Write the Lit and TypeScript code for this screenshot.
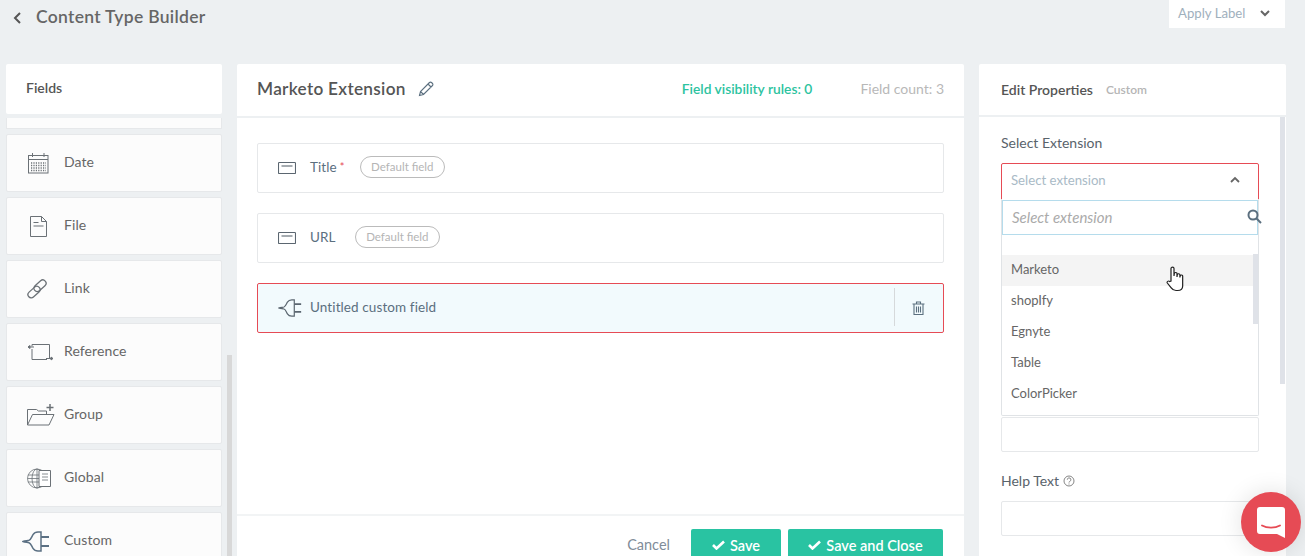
import { LitElement, html, css } from "lit";
import { customElement } from "lit/decorators.js";

const plug = (w: number, h: number, color: string, sw = 1.5) => html`<svg width=${w} height=${h} viewBox="0 0 28 21" fill="none" stroke=${color} stroke-width=${sw}><path d="M1 10.500c2-.9 4-.7 6-1.200 2-.6 2.500-3.200 4-5.600 1-1.600 2.500-2.700 5-2.700h3v19h-3c-2.500 0-4-1.100-5-2.700-1.500-2.400-2-5-4-5.600-2-.5-4-.3-6-1.200z" fill="none"/><path d="M19 6h8M19 15h8" stroke-width="2"/></svg>`;
const textIcon = html`<svg width="18" height="14" viewBox="0 0 18 14" fill="none" stroke="#5b6670" stroke-width="1.100"><rect x=".5" y="1.500" width="17" height="11" rx=".8"/><path d="M3.500 5h11"/></svg>`;

const icons: Record<string, unknown> = {
  Date: html`<svg width="21" height="21" viewBox="0 0 21 21" fill="none" stroke="#6b7176" stroke-width="1"><rect x=".5" y="2.500" width="19.500" height="17.500"/><path d="M.5 6.500h19.500M4.500 0v4M16 0v4"/><path d="M3 10h15M3 12.500h15M3 15h15M3 17.500h15" stroke-dasharray="1.200 1.200" stroke-width="1.300"/></svg>`,
  File: html`<svg width="17" height="21" viewBox="0 0 17 21" fill="none" stroke="#6b7176" stroke-width="1"><path d="M.5.500h11l5 5v15H.5zM11.500.500v5h5"/><path d="M3.500 6.500h5M3.500 10h10"/></svg>`,
  Link: html`<svg width="22" height="20" viewBox="0 0 22 20" fill="none" stroke="#6b7176" stroke-width="1.300"><rect x="7" y="3.500" width="14" height="6.500" rx="3.250" transform="rotate(-42 14 6.750)"/><rect x="1" y="9.800" width="14" height="6.500" rx="3.250" transform="rotate(-42 8 13)"/></svg>`,
  Reference: html`<svg width="28" height="18" viewBox="0 0 28 18" fill="none" stroke="#6b7176" stroke-width="1"><path d="M5 3.500V1.500h17.500v13.500M20 16.500H5V6"/><path d="M1 4h6M19 15.500h7"/><path d="M3 2.500 1 4l2 1.500zM24 14l2 1.500-2 1.500z" fill="#6b7176"/></svg>`,
  Group: html`<svg width="28" height="22" viewBox="0 0 28 22" fill="none" stroke="#6b7176" stroke-width="1"><path d="M.5 21V5.500h9l2 1.500h8v3"/><path d="M.5 21 5.500 10.500H27L22 21z"/><path d="M23 0v7M19.500 3.500h7" stroke-width="1.500"/></svg>`,
  Global: html`<svg width="24" height="21" viewBox="0 0 24 21" fill="none" stroke="#6b7176" stroke-width=".8"><circle cx="10" cy="10.500" r="9.500"/><ellipse cx="10" cy="10.500" rx="5" ry="9.500"/><path d="M10 1v19M1 7h18M.5 10.500h18M1 14h18"/><path d="M12 2.500h11.500v16H12z" fill="#fff" stroke-width="1"/><path d="M15 6h6M15 9h6M15 12h6"/></svg>`,
  Custom: plug(28, 21, "#5b7083"),
};

@customElement("app-root")
export class AppRoot extends LitElement {
  static styles = css`
    :host { display: block; position: relative; width: 1305px; height: 556px; overflow: hidden; background: #edf0f2; font-family: "Lato", "Liberation Sans", sans-serif; color: #555; }
    * { box-sizing: border-box; }
    .top { display: flex; height: 64px; align-items: flex-start; padding-left: 13px; }
    .back { margin-top: 12px; }
    .crumb { margin: 6px 0 0 14px; font-size: 17.500px; font-weight: 600; line-height: 22px; color: #666; letter-spacing: .3px; }
    .label-btn { margin-left: auto; margin-right: 20px; width: 116px; height: 28px; background: #fff; display: flex; align-items: center; padding: 0 15px 2px 9px; justify-content: space-between; font-size: 13.200px; color: #9fb0bd; }
    .cols { display: flex; padding-left: 6px; gap: 15px; height: 492px; }
    .left { width: 216px; display: flex; flex-direction: column; }
    .left-head { height: 50px; background: #fff; border-radius: 2px; padding: 0 20px 3px; display: flex; align-items: center; font-size: 14px; font-weight: 600; color: #555; flex: none; }
    .list { display: flex; flex-direction: column; gap: 5px; margin-top: 4px; }
    .stub { height: 11px; background: #fcfcfc; border: 1px solid #e6e8ea; border-top: 0; }
    .card { height: 58px; flex: none; background: #fcfcfc; border: 1px solid #e6e8ea; border-radius: 2px; display: flex; align-items: center; font-size: 14px; letter-spacing: .1px; color: #666; }
    .card .ic { width: 57px; display: flex; justify-content: flex-start; }
    .card span { position: relative; top: -2px; }
    .ic-Date { padding-left: 21px; }
    .ic-File { padding-left: 23px; }
    .ic-Link { padding-left: 19px; }
    .ic-Reference { padding-left: 20px; }
    .ic-Group { padding-left: 20px; }
    .ic-Global { padding-left: 20px; }
    .ic-Custom { padding-left: 15px; }
    .mid { width: 727px; background: #fff; border-radius: 2px 2px 0 0; display: flex; flex-direction: column; position: relative; }
    .mid-head { height: 54px; border-bottom: 2px solid #edf0f2; display: flex; align-items: center; padding: 0 20px 3px 20px; flex: none; }
    .mid-head h1 { margin: 0 12px 0 0; font-size: 17.200px; font-weight: 600; color: #555; letter-spacing: .3px; }
    .rules { margin-left: auto; color: #2dc3a0; font-size: 13.800px; font-weight: 600; }
    .count { margin-left: 48px; color: #b8b8b8; font-size: 14px; }
    .rows { flex: 1; padding: 25px 20px 0; display: flex; flex-direction: column; gap: 20px; }
    .row { height: 50px; border: 1px solid #e6e8ea; border-radius: 2px; display: flex; align-items: center; padding: 0 0 2px 20px; font-size: 13.500px; letter-spacing: .1px; color: #5b6f7f; }
    .row svg { position: relative; top: 1px; }
    .row .t { margin-left: 14px; }
    .req { color: #e64b55; margin-left: 3px; font-size: 11px; position: relative; top: -1px; }
    .pill { margin-left: 19px; height: 22px; padding: 0 10.500px; border: 1px solid #bbb; border-radius: 11px; font-size: 11.500px; letter-spacing: 0; line-height: 20px; color: #b5b5b5; }
    .req + .pill { margin-left: 15px; }
    .row.sel { background: #f2fafd; border-color: #e64b55; }
    .row.sel .t { margin-left: 8px; }
    .trash { margin-left: auto; width: 49px; height: 38px; border-left: 1px solid #d6d9db; display: flex; align-items: center; justify-content: center; padding-right: 2px; }
    .foot { height: 42px; flex: none; border-top: 2px solid #f2f4f5; display: flex; padding: 13px 21px 0 0; justify-content: flex-end; gap: 7px; }
    .cancel { font-size: 14.500px; color: #7f8c99; margin-right: 14px; line-height: 31px; }
    .btn { height: 32px; background: #29c3a2; color: #fff; border-radius: 2px; font-size: 14.500px; font-weight: 600; display: flex; align-items: center; justify-content: center; gap: 5px; }
    .b1 { width: 90px; }
    .b2 { width: 155px; }
    .right { width: 307px; background: #fff; border-radius: 2px 2px 0 0; position: relative; display: flex; flex-direction: column; }
    .right-head { height: 53px; flex: none; border-bottom: 2px solid #edf0f2; display: flex; align-items: center; padding: 0 22px; }
    .right-head b { font-size: 14px; font-weight: 600; color: #555; }
    .right-head small { margin-left: 13px; font-size: 12px; font-weight: 600; color: #b5b5b5; }
    .body { flex: 1; padding: 17px 27px 0 22px; font-size: 14px; }
    .lbl { color: #59636b; line-height: 18px; font-size: 14px; }
    .select { margin-top: 11px; height: 37px; border: 1px solid #e64b55; border-radius: 2px 2px 0 0; display: flex; align-items: center; justify-content: space-between; padding: 0 18px 4px 9px; font-size: 13.200px; color: #a9bac6; }
    .dd { position: relative; height: 0; }
    .menu { position: absolute; left: 0; top: -1px; width: 258px; height: 217px; padding-top: 1px; background: #fff; border: 1px solid #e0e3e6; border-top: 0; border-radius: 0 0 2px 2px; display: flex; flex-direction: column; font-size: 13px; color: #666; }
    .search { height: 35px; flex: none; border: 1px solid #b5dcec; display: flex; align-items: center; padding: 0 0 2px 9px; font-style: italic; font-size: 15px; color: #aaa; position: relative; }
    .search svg { position: absolute; right: -5px; top: 8px; }
    .opts { margin-top: 20px; }
    .opt { height: 31px; line-height: 29px; padding-left: 9px; width: 251px; }
    .opt.hover { background: #f4f4f4; }
    .menu .bar { position: absolute; right: 0; top: 55px; width: 5px; height: 70px; background: #dfe2e8; }
    .input { height: 35px; border: 1px solid #e6e8ea; border-radius: 2px; }
    .spacer { height: 217px; }
    .help { margin-top: 20px; display: flex; align-items: center; gap: 4px; }
    .i2 { margin-top: 11px; }
    .rbar { position: absolute; left: 301px; top: 53px; width: 5px; height: 267px; background: #dfe2e8; }
    .lbar { position: absolute; left: 227px; top: 355px; width: 5px; height: 201px; background: #d8d8d8; }
    .cursor { position: absolute; left: 1166px; top: 266px; }
    .chat { position: absolute; left: 1241px; top: 492px; width: 60px; height: 60px; border-radius: 50%; background: #e64b55; box-shadow: 0 0 24px rgba(0,0,0,.12); display: flex; align-items: center; justify-content: center; }
  `;

  render() {
    return html`
      <div class="top">
        <svg class="back" width="9" height="12" viewBox="0 0 9 12" fill="none" stroke="#555" stroke-width="2"><path d="M7 1 2 6l5 5"/></svg>
        <div class="crumb">Content Type Builder</div>
        <div class="label-btn"><span>Apply Label</span>
          <svg width="10" height="7" viewBox="0 0 10 7" fill="none" stroke="#666" stroke-width="2"><path d="M1 1l4 4 4-4"/></svg>
        </div>
      </div>
      <div class="cols">
        <div class="left">
          <div class="left-head">Fields</div>
          <div class="list">
            <div class="stub"></div>
            ${Object.keys(icons).map(k => html`<div class="card"><div class="ic ic-${k}">${icons[k]}</div><span>${k}</span></div>`)}
          </div>
        </div>
        <div class="mid">
          <div class="mid-head">
            <h1>Marketo Extension</h1>
            <svg width="16" height="16" viewBox="0 0 16 16" fill="none" stroke="#5b6f7f" stroke-width="1.100"><path d="M1.500 14.500l1-4L11.500 1.500a1.400 1.400 0 0 1 2 0l1 1a1.400 1.400 0 0 1 0 2l-9 9zM2.500 10.500l3 3M10 3l3 3"/></svg>
            <div class="rules">Field visibility rules: 0</div>
            <div class="count">Field count: 3</div>
          </div>
          <div class="rows">
            <div class="row">${textIcon}<span class="t">Title</span><span class="req">*</span><span class="pill">Default field</span></div>
            <div class="row">${textIcon}<span class="t">URL</span><span class="pill">Default field</span></div>
            <div class="row sel">${plug(24, 18, "#5b6670", 1.4)}<span class="t">Untitled custom field</span>
              <div class="trash"><svg width="13" height="14" viewBox="0 0 13 14" fill="none" stroke="#5b6f7f" stroke-width="1.100"><path d="M.5 3h12M4.500 3V1h4v2M2 3v10.500h9V3"/><path d="M4.500 5.500v6M6.500 5.500v6M8.500 5.500v6"/></svg></div>
            </div>
          </div>
          <div class="foot">
            <div class="cancel">Cancel</div>
            <div class="btn b1"><svg width="13" height="10" viewBox="0 0 13 10" fill="none" stroke="#fff" stroke-width="2.600"><path d="M1 5l3.500 3.500L12 1.500"/></svg>Save</div>
            <div class="btn b2"><svg width="13" height="10" viewBox="0 0 13 10" fill="none" stroke="#fff" stroke-width="2.600"><path d="M1 5l3.500 3.500L12 1.500"/></svg>Save and Close</div>
          </div>
        </div>
        <div class="right">
          <div class="right-head"><b>Edit Properties</b><small>Custom</small></div>
          <div class="body">
            <div class="lbl">Select Extension</div>
            <div class="select"><span>Select extension</span>
              <svg width="10" height="7" viewBox="0 0 10 7" fill="none" stroke="#666" stroke-width="1.800"><path d="M1 6l4-4 4 4"/></svg>
            </div>
            <div class="dd">
              <div class="menu">
                <div class="search">Select extension
                  <svg width="15" height="15" viewBox="0 0 15 15" fill="none" stroke="#5b6f7f" stroke-width="2"><circle cx="6" cy="6" r="4.500"/><path d="M9.500 9.500 14 14"/></svg>
                </div>
                <div class="opts">
                  <div class="opt hover">Marketo</div>
                  <div class="opt">shopIfy</div>
                  <div class="opt">Egnyte</div>
                  <div class="opt">Table</div>
                  <div class="opt">ColorPicker</div>
                </div>
                <div class="bar"></div>
              </div>
            </div>
            <div class="spacer"></div>
            <div class="input"></div>
            <div class="help lbl">Help Text
              <svg width="12" height="12" viewBox="0 0 12 12" fill="none" stroke="#777" stroke-width=".9"><circle cx="6" cy="6" r="5"/><path d="M4.300 4.700a1.800 1.800 0 1 1 2.600 1.600c-.6.300-.9.600-.9 1.200M6 8.500v1"/></svg>
            </div>
            <div class="input i2"></div>
          </div>
          <div class="rbar"></div>
        </div>
      </div>
      <div class="lbar"></div>
      <svg class="cursor" width="20" height="26" viewBox="0 0 18 26" preserveAspectRatio="none" fill="#fff" stroke="#222" stroke-width="1.100"><path d="M4.500 15V2.500a1.300 1.300 0 0 1 2.700 0V10l.3-2.500a1.200 1.200 0 0 1 2.400.3V11l.3-2.500a1.200 1.200 0 0 1 2.300.3v2.700l.3-1.500a1.100 1.100 0 0 1 2.200.3V20c0 2.500-1.700 4.500-4.500 4.500H9c-2 0-3.300-1-4.300-2.600L1.200 17c-.8-1.300 1-2.700 2-1.500z"/></svg>
      <div class="chat"><svg width="28" height="31" viewBox="0 0 28 31"><path d="M3 0h22a3 3 0 0 1 3 3v28l-8-4H3a3 3 0 0 1-3-3V3a3 3 0 0 1 3-3z" fill="#fff"/><path d="M5 18.500c5 2.800 13 2.800 18 0" fill="none" stroke="#e64b55" stroke-width="1.800" stroke-linecap="round"/></svg></div>
    `;
  }
}
